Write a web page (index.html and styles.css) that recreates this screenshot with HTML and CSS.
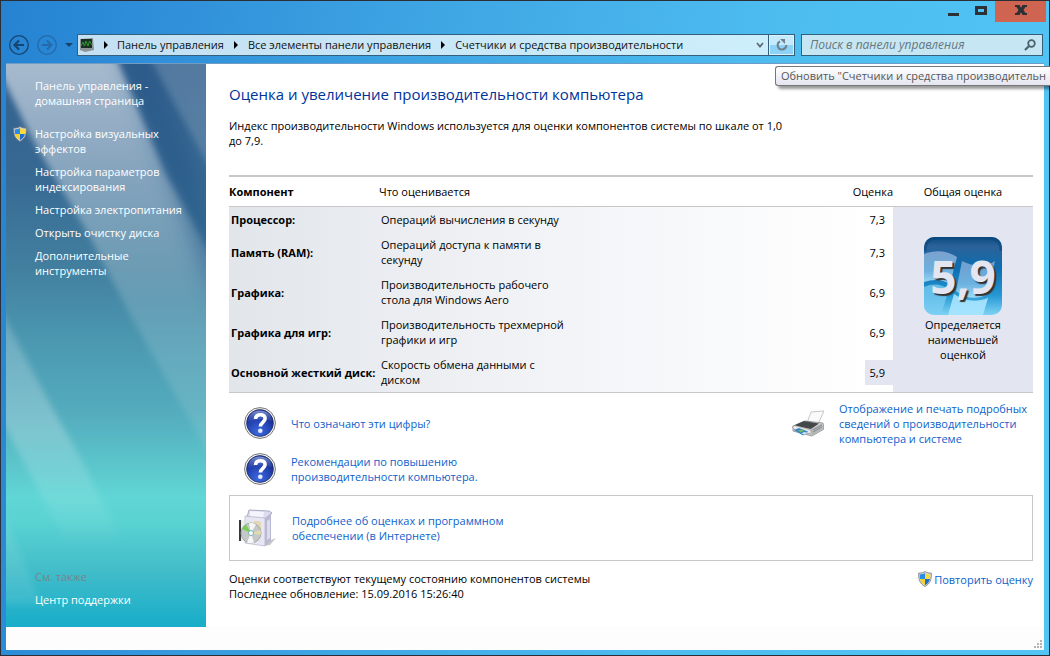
FILE: index.html
```html
<!DOCTYPE html>
<html lang="ru">
<head>
  <meta charset="UTF-8">
  <meta name="viewport" content="width=device-width, initial-scale=1.0">
  <title>Счетчики и средства производительности</title>
  <link rel="stylesheet" href="styles.css">
</head>
<body>
  <!-- shared icons -->
  <svg class="defs" width="0" height="0" aria-hidden="true">
    <defs>
      <radialGradient id="ballFill" cx="0.45" cy="0.85" r="0.8">
        <stop offset="0" stop-color="#3c6ae0"/>
        <stop offset="0.55" stop-color="#2545b4"/>
        <stop offset="1" stop-color="#101f78"/>
      </radialGradient>
      <linearGradient id="ballShine" x1="0" y1="0" x2="0" y2="1">
        <stop offset="0" stop-color="#a9bdf0" stop-opacity="0.75"/>
        <stop offset="1" stop-color="#4a6cd0" stop-opacity="0.2"/>
      </linearGradient>
      <clipPath id="shieldClip">
        <path d="M7 2C8.400 3 10.200 3.400 12.200 3.400 12.400 8 11.400 11.800 7 14.200 2.600 11.800 1.600 8 1.800 3.400 3.800 3.400 5.600 3 7 2z"/>
      </clipPath>
    </defs>
    <symbol id="shield" viewBox="0 0 14 16">
      <path d="M7 .5C8.500 1.600 10.700 2.100 13.300 2.100 13.700 8.500 12 12.900 7 15.500 2 12.900.3 8.500.7 2.100 3.300 2.100 5.500 1.600 7 .5z" fill="#d3d6da" stroke="#77777a" stroke-width="0.8"/>
      <g clip-path="url(#shieldClip)">
        <rect x="0" y="0" width="7" height="8" fill="#2a8ae8"/>
        <rect x="7" y="0" width="7" height="8" fill="#fbdc3c"/>
        <rect x="0" y="8" width="7" height="8" fill="#f8d02c"/>
        <rect x="7" y="8" width="7" height="8" fill="#1b6ed0"/>
      </g>
    </symbol>
    <symbol id="help" viewBox="0 0 32 32">
      <circle cx="16" cy="16" r="15.400" fill="#f4f4f4" stroke="#777" stroke-width="1"/>
      <circle cx="16" cy="16" r="13.400" fill="url(#ballFill)" stroke="#26346f" stroke-width="0.8"/>
      <path d="M4 15C4 7 10 3.500 16 3.500S28 7 28 14c-8-2-16-2-24 1z" fill="url(#ballShine)"/>
      <path d="M11.500 12c.2-3 2.200-4.300 4.900-4.300 2.800 0 4.700 1.500 4.700 3.900 0 3.600-4.700 3.800-4.700 7.800" fill="none" stroke="#fff" stroke-width="3.600"/>
      <circle cx="16.300" cy="23.700" r="2.300" fill="#e6eafb"/>
    </symbol>
  </svg>

  <div class="window">
    <header class="titlebar">
      <div class="caption">
        <button class="caption-button" aria-label="Свернуть">
          <svg width="12" height="12" viewBox="0 0 12 12"><path d="M1 9h11v3H1z" fill="#2d3136"/></svg>
        </button>
        <button class="caption-button" aria-label="Развернуть">
          <svg width="12" height="12" viewBox="0 0 12 12"><path d="M1.500 3.500h9v6h-9z" fill="none" stroke="#2d3136" stroke-width="3"/></svg>
        </button>
        <button class="caption-button close" aria-label="Закрыть">
          <svg width="12" height="10" viewBox="0 0 12 10"><path d="M0 0h4.500L6 2.700 7.500 0H12v2H10.500L8.500 5l2 3H12v2H7.500L6 7.300 4.500 10H0V8h1.500l2-3-2-3H0z" fill="#2d3136"/></svg>
        </button>
      </div>
      <nav class="navbar">
        <button class="round-button" aria-label="Назад">
          <svg width="20" height="20" viewBox="0 0 20 20" fill="none" stroke="#174571"><circle cx="10" cy="10" r="9.300" stroke-width="1.300"/><path d="M15 10H6M10 5.500L5.500 10l4.500 4.500" stroke-width="2.200"/></svg>
        </button>
        <button class="round-button" aria-label="Вперед">
          <svg width="20" height="20" viewBox="0 0 20 20" fill="none" stroke="#2469a9"><circle cx="10" cy="10" r="9.300" stroke-width="1.300"/><path d="M5 10h9M10 5.500l4.500 4.500-4.500 4.500" stroke-width="1.800"/></svg>
        </button>
        <button class="history-button" aria-label="Последние страницы">
          <svg width="8" height="4" viewBox="0 0 8 4"><path d="M0 0h8L4 4z" fill="#174571"/></svg>
        </button>
        <div class="address">
          <svg class="address-icon" width="14" height="14" viewBox="0 0 14 14">
            <path d="M0 1l13-1 1 12-9 2-5-2z" fill="#8c9495"/>
            <path d="M1 1h11v9H1z" fill="#173021"/>
            <path d="M1 8l2-4 1.500 4L6 3l2 5 1.500-5L12 7" fill="none" stroke="#2f9a35" stroke-width="1"/>
          </svg>
          <svg class="crumb-arrow" width="4" height="8" viewBox="0 0 4 8"><path d="M0 0l4 4-4 4z"/></svg>
          <a href="#">Панель управления</a>
          <svg class="crumb-arrow" width="4" height="8" viewBox="0 0 4 8"><path d="M0 0l4 4-4 4z"/></svg>
          <a href="#">Все элементы панели управления</a>
          <svg class="crumb-arrow" width="4" height="8" viewBox="0 0 4 8"><path d="M0 0l4 4-4 4z"/></svg>
          <a href="#">Счетчики и средства производительности</a>
          <button class="address-drop" aria-label="Предыдущие расположения">
            <svg width="8" height="6" viewBox="0 0 8 6"><path d="M1 1l3 3.500L7 1" fill="none" stroke="#5d6d76" stroke-width="1.800"/></svg>
          </button>
          <button class="refresh" aria-label="Обновить">
            <svg width="12" height="12" viewBox="0 0 12 12"><path d="M4 2.400A4.300 4.300 0 1 0 10.300 6" fill="none" stroke="#71818c" stroke-width="2"/><path d="M4 0h5v5z" fill="#71818c"/></svg>
          </button>
        </div>
        <div class="search">
          <input type="text" placeholder="Поиск в панели управления" aria-label="Поиск в панели управления">
          <svg width="12" height="12" viewBox="0 0 12 12" fill="none" stroke="#4c626d"><circle cx="7.500" cy="4.500" r="3.300" stroke-width="1.800"/><path d="M5 7L1 11" stroke-width="2.200"/></svg>
        </div>
      </nav>
      <div class="tooltip">Обновить "Счетчики и средства производительн</div>
    </header>

    <div class="client">
      <aside class="sidebar">
        <svg class="aurora" viewBox="0 0 200 563" preserveAspectRatio="none" aria-hidden="true">
          <defs>
            <linearGradient id="beam" x1="0" y1="0" x2="0" y2="1">
              <stop offset="0" stop-color="#fff" stop-opacity="0.6"/>
              <stop offset="0.35" stop-color="#fff" stop-opacity="0.36"/>
              <stop offset="0.6" stop-color="#fff" stop-opacity="0.16"/>
              <stop offset="1" stop-color="#fff" stop-opacity="0.08"/>
            </linearGradient>
            <linearGradient id="lowBeam" x1="0" y1="0" x2="0" y2="1">
              <stop offset="0" stop-color="#fff" stop-opacity="0.18"/>
              <stop offset="0.5" stop-color="#fff" stop-opacity="0.24"/>
              <stop offset="0.85" stop-color="#fff" stop-opacity="0.08"/>
              <stop offset="1" stop-color="#fff" stop-opacity="0"/>
            </linearGradient>
            <filter id="soft" x="-20%" y="-20%" width="140%" height="140%"><feGaussianBlur stdDeviation="3"/></filter>
            <filter id="softer" x="-50%" y="-20%" width="200%" height="140%"><feGaussianBlur stdDeviation="10"/></filter>
          </defs>
          <path d="M-20-20L27 76 84 173 127 256 161 316 215 410V210L160 110 105-20z" fill="url(#beam)" filter="url(#soft)"/>
          <path d="M110-20h22L215 170v80L165 120z" fill="#245384" opacity="0.5" filter="url(#softer)"/>
          <path d="M142-10h70V120z" fill="#fff" opacity="0.16" filter="url(#soft)"/>
          <path d="M-10 236L31 316 77 399 115 475 64 483 34 429-10 346z" fill="url(#lowBeam)" filter="url(#soft)"/>
          <path d="M-10 430l45 110h-45z" fill="#fff" opacity="0.08" filter="url(#soft)"/>
        </svg>
        <a class="home" href="#">Панель управления -<br>домашняя страница</a>
        <ul>
          <li><svg class="side-shield" width="14" height="16"><use href="#shield"/></svg><a href="#">Настройка визуальных<br>эффектов</a></li>
          <li><a href="#">Настройка параметров<br>индексирования</a></li>
          <li><a href="#">Настройка электропитания</a></li>
          <li><a href="#">Открыть очистку диска</a></li>
          <li><a href="#">Дополнительные<br>инструменты</a></li>
        </ul>
        <div class="see-also">
          <span>См. также</span>
          <a href="#">Центр поддержки</a>
        </div>
      </aside>

      <main class="main">
        <h1>Оценка и увеличение производительности компьютера</h1>
        <p class="intro">Индекс производительности Windows используется для оценки компонентов системы по шкале от 1,0<br>до 7,9.</p>

        <table class="scores">
          <thead>
            <tr>
              <th class="component" scope="col">Компонент</th>
              <th scope="col">Что оценивается</th>
              <th class="score" scope="col">Оценка</th>
              <th class="total" scope="col">Общая оценка</th>
            </tr>
          </thead>
          <tbody>
            <tr>
              <th scope="row">Процессор:</th>
              <td>Операций вычисления в секунду</td>
              <td class="score">7,3</td>
              <td class="total" rowspan="5">
                <div class="badge">
                  <svg width="78" height="78" viewBox="0 0 78 78" aria-hidden="true">
                    <defs>
                      <linearGradient id="badgeFill" x1="0" y1="0" x2="0" y2="1">
                        <stop offset="0" stop-color="#0b4a80"/>
                        <stop offset="0.12" stop-color="#2c6299"/>
                        <stop offset="0.4" stop-color="#0d6db0"/>
                        <stop offset="0.75" stop-color="#2798d4"/>
                        <stop offset="1" stop-color="#7fd3f5"/>
                      </linearGradient>
                      <linearGradient id="flagFill" x1="0" y1="0" x2="0" y2="1">
                        <stop offset="0" stop-color="#8aacd6"/>
                        <stop offset="0.6" stop-color="#7fbce6"/>
                        <stop offset="1" stop-color="#b9ebff"/>
                      </linearGradient>
                      <clipPath id="badgeClip"><rect width="78" height="78" rx="10"/></clipPath>
                    </defs>
                    <g clip-path="url(#badgeClip)">
                      <rect width="78" height="78" fill="url(#badgeFill)"/>
                      <path d="M0 17c12-5 24-3 33 3l-7 27C18 42 9 42 0 45z" fill="url(#flagFill)" opacity="0.85"/>
                      <path d="M38 24c12 6 24 6 33 0l-7 33c-11 6-22 5-32-3z" fill="url(#flagFill)" opacity="0.8"/>
                      <path d="M0 50c9-4 17-3 25 2l-8 26H0z" fill="#7ccdf3" opacity="0.75"/>
                      <path d="M30 57c10 7 22 9 34 4l-5 17H24z" fill="#a9e6ff" opacity="0.9"/>
                      <path d="M1 14C1 5 6 1 14 1h50c8 0 13 4 13 13" fill="none" stroke="#06477c" stroke-width="3" opacity="0.6"/>
                    </g>
                  </svg>
                  <span class="badge-value">5,9</span>
                </div>
                Определяется<br>наименьшей<br>оценкой
              </td>
            </tr>
            <tr>
              <th scope="row">Память (RAM):</th>
              <td>Операций доступа к памяти в<br>секунду</td>
              <td class="score">7,3</td>
            </tr>
            <tr>
              <th scope="row">Графика:</th>
              <td>Производительность рабочего<br>стола для Windows Aero</td>
              <td class="score">6,9</td>
            </tr>
            <tr>
              <th scope="row">Графика для игр:</th>
              <td>Производительность трехмерной<br>графики и игр</td>
              <td class="score">6,9</td>
            </tr>
            <tr>
              <th scope="row">Основной жесткий диск:</th>
              <td>Скорость обмена данными с<br>диском</td>
              <td class="score"><span class="lowest">5,9</span></td>
            </tr>
          </tbody>
        </table>

        <div class="links">
          <div class="help-links">
            <div class="link-row">
              <svg width="32" height="32"><use href="#help"/></svg>
              <a href="#">Что означают эти цифры?</a>
            </div>
            <div class="link-row">
              <svg width="32" height="32"><use href="#help"/></svg>
              <a href="#">Рекомендации по повышению<br>производительности компьютера.</a>
            </div>
          </div>
          <div class="link-row print-link">
            <svg width="32" height="28" viewBox="0 0 32 28">
              <path d="M15 13L19 2l13-1-6 13z" fill="#fafafa" stroke="#b9b9b9" stroke-width="0.800"/>
              <path d="M1 16l12-5 18 2 1 6-12 7-19-5z" fill="#d2d3d4" stroke="#88898b" stroke-width="0.800"/>
              <path d="M2 15.500L12 11l15 2.500L19 19z" fill="#45484b"/>
              <path d="M19 19l11-5.500 1 5-11 7z" fill="#b4b6b8"/>
              <path d="M21 20l9-5M21 22l9-5" stroke="#7d8083" stroke-width="0.800"/>
              <path d="M0 17l3-1.500 16 4.500v4L3 20z" fill="#e8e9ea" stroke="#888" stroke-width="0.600"/>
              <path d="M2 20l5-2 9 3.500-5 4z" fill="#3b87c6"/>
              <path d="M6 20.500l3-1 3 1-3 2z" fill="#79b957"/>
              <path d="M12 22l3 .5-2.500 2-3-.8z" fill="#cfe9fa"/>
            </svg>
            <a href="#">Отображение и печать подробных<br>сведений о производительности<br>компьютера и системе</a>
          </div>
        </div>

        <div class="more-box">
          <svg width="38" height="40" viewBox="0 0 38 40">
            <path d="M30 33l8-3-6 7-6 1z" fill="#c8c8c8"/>
            <path d="M9 9l2-7 20 1 3 2-5 6z" fill="#dcdcf0" stroke="#9a9abb" stroke-width="0.800"/>
            <path d="M12 3l14 1-1 6-13-1z" fill="#f4f4fc"/>
            <path d="M7 8l20 2v28L7 35z" fill="#e6e6f4" stroke="#a8a8bf" stroke-width="0.600"/>
            <path d="M27 10l6-5v28l-6 5z" fill="#b9b9d2"/>
            <path d="M29 13l3-2v19l-3 2z" fill="#dcdcec"/>
            <path d="M16 13l7 1v12l-7-3z" fill="#f0c479"/>
            <path d="M3 12l20 2v20L3 33z" fill="#dce5dd" opacity="0.600"/>
            <path d="M1 12h2v21H1z" fill="#36383a"/>
            <circle cx="13" cy="25" r="10" fill="#c4c8c8" stroke="#969b9b" stroke-width="0.800"/>
            <path d="M13 25L4 21a10 10 0 0 1 4-4.500z" fill="#79cc55"/>
            <path d="M13 25L11 15.300a10 10 0 0 1 7 1.300zM13 25l3 9.500a10 10 0 0 1-7 0z" fill="#f5f7f7"/>
            <path d="M13 25l9.500-3a10 10 0 0 1 0 5z" fill="#e4d9b1"/>
            <circle cx="13" cy="25" r="2.500" fill="#fff" stroke="#77b5b5" stroke-width="1"/>
          </svg>
          <a href="#">Подробнее об оценках и программном<br>обеспечении (в Интернете)</a>
        </div>

        <div class="summary">
          <p>Оценки соответствуют текущему состоянию компонентов системы<br>Последнее обновление: 15.09.2016 15:26:40</p>
          <a class="rerun" href="#"><svg width="14" height="16"><use href="#shield"/></svg>Повторить оценку</a>
        </div>
      </main>
    </div>

    <footer class="statusbar">
      <svg width="9" height="9" viewBox="0 0 9 9" fill="#b4b4b4"><path d="M6 0h2v2H6zM3 3h2v2H3zM6 3h2v2H6zM0 6h2v2H0zM3 6h2v2H3zM6 6h2v2H6z"/></svg>
    </footer>
  </div>
</body>
</html>
```

FILE: styles.css
```css
* {
  box-sizing: border-box;
}
body {
  margin: 0;
  font-family: "Open Sans", "Noto Sans", sans-serif;
  font-size: 11px;
  line-height: 15px;
  color: #000;
  overflow: hidden;
}
a {
  color: #0c62cb;
  text-decoration: none;
}
a:hover {
  text-decoration: underline;
}
button {
  display: flex;
  align-items: center;
  justify-content: center;
  padding: 0;
  border: none;
  background: none;
}
svg {
  display: block;
  flex: none;
}
p {
  margin: 0;
}
.defs {
  position: absolute;
}

/* window frame */
.window {
  display: flex;
  flex-direction: column;
  min-height: 100vh;
  padding: 0 5px 5px;
  border: 1px solid #2c2e36;
  background: linear-gradient(100deg, #2583d2 0%, #2f8fd9 14%, #3fa6e4 38%, #4dbdf0 68%, #52c5f5 100%);
}
.titlebar {
  position: relative;
  padding-bottom: 7px;
  border-bottom: 1px solid #6f9cc4;
}
.caption {
  display: flex;
  justify-content: flex-end;
  height: 21px;
  margin-right: -2px;
}
.caption-button {
  width: 28px;
  padding-bottom: 3px;
}
.caption-button.close {
  width: 51px;
  background: #cf6450;
}
.navbar {
  display: flex;
  align-items: center;
  height: 22px;
  margin: 12px 1px 0 3px;
}
.round-button {
  width: 20px;
  height: 20px;
  margin-right: 8px;
}
.history-button {
  width: 8px;
  height: 20px;
  margin-right: 4px;
}
.address {
  display: flex;
  flex: 1;
  align-items: center;
  height: 22px;
  border: 1px solid #35607d;
  background: linear-gradient(90deg, #c4e0f3, #cdeefb);
}
.address a {
  padding-bottom: 1px;
  color: #111;
  white-space: nowrap;
}
.address-icon {
  margin: 0 8px 0 2px;
}
.crumb-arrow {
  margin: 0 10px;
}
.address-icon + .crumb-arrow {
  margin: 0 9px 0 2px;
}
.address-drop {
  width: 18px;
  height: 20px;
  margin-left: auto;
}
.refresh {
  width: 25px;
  height: 20px;
  border: 1px solid #d9f2fe;
  outline: 1px solid #35607d;
  background: linear-gradient(#c5eafc 48%, #8dd2f7 52%);
}
.search {
  display: flex;
  align-items: center;
  width: 242px;
  height: 22px;
  margin-left: 6px;
  padding: 0 6px 0 8px;
  border: 1px solid #35607d;
  background: #c5e6f2;
}
.search input {
  flex: 1;
  min-width: 0;
  padding: 0;
  border: none;
  outline: none;
  background: none;
  font: italic 12px/18px "Open Sans", "Noto Sans", sans-serif;
}
.search input::placeholder {
  color: #65777f;
  opacity: 1;
}
.tooltip {
  position: absolute;
  top: 65px;
  right: -6px;
  left: 769px;
  z-index: 2;
  height: 20px;
  padding: 1px 0 2px 5px;
  border: 1px solid #767676;
  border-right: none;
  border-radius: 3px 0 0 3px;
  background: linear-gradient(#fff, #e4e5f0);
  box-shadow: 3px 3px 3px rgba(0, 0, 0, 0.4);
  color: #575757;
  white-space: nowrap;
}

/* sidebar */
.client {
  display: flex;
  flex: 1;
  background: #fff;
}
.sidebar {
  position: relative;
  display: flex;
  flex-direction: column;
  width: 200px;
  padding: 14px 0 20px 29px;
  background: linear-gradient(#33608e 0%, #376993 20%, #427f9f 36%, #4d9db4 52%, #54acbd 62%, #60d6d5 77%, #5bd3d3 81%, #42bdc9 90%, #17adc9 100%);
}
.aurora {
  position: absolute;
  inset: 0;
  width: 100%;
  height: 100%;
}
.sidebar a,
.see-also {
  position: relative;
  color: #fff;
}
.sidebar ul {
  display: flex;
  flex-direction: column;
  gap: 8px;
  margin: 18px 0 0;
  padding: 0;
  list-style: none;
}
.sidebar li {
  position: relative;
}
.side-shield {
  position: absolute;
  left: -22px;
  top: 0;
}
.see-also {
  display: flex;
  flex-direction: column;
  gap: 8px;
  margin-top: auto;
}
.see-also span {
  color: #75868a;
}

/* content */
.main {
  flex: 1;
  padding: 20px 11px 0 23px;
}
h1 {
  margin: 0;
  font-size: 15px;
  font-weight: normal;
  line-height: 20px;
  color: #003399;
}
.intro {
  margin-top: 14px;
}
.scores {
  width: 100%;
  margin: 27px 0 8px;
  border-collapse: separate;
  border-spacing: 0;
  border-top: 2px solid #c8c8c8;
  border-bottom: 1px solid #c8c8c8;
}
.scores th,
.scores td {
  padding: 5px 2px;
  text-align: left;
  white-space: nowrap;
}
.scores thead th {
  padding: 7px 0;
  border-bottom: 1px solid #c8c8c8;
  font-weight: normal;
}
.scores thead .component {
  width: 150px;
  font-weight: bold;
}
.scores tbody {
  background: linear-gradient(90deg, #e2e6eb 0%, #f4f5f8 45%, #fff 80%);
}
.scores .score {
  text-align: right;
}
.scores td.score {
  padding-right: 8px;
}
.lowest {
  display: inline-block;
  margin-right: -8px;
  padding: 5px 8px 5px 5px;
  background: #e3e6f1;
}
.scores .total {
  width: 140px;
  text-align: center;
}
.scores tbody .total {
  background: #e3e6f1;
}
.badge {
  position: relative;
  width: 78px;
  margin: 0 auto 2px;
}
.badge-value {
  position: absolute;
  inset: 0;
  font-size: 46px;
  font-weight: bold;
  line-height: 78px;
  color: #e3e6f1;
  text-shadow: 2px 2px 1px #333;
}
.links {
  display: flex;
  justify-content: space-between;
}
.help-links {
  display: flex;
  flex-direction: column;
  gap: 14px;
  padding: 6px 0 0 15px;
}
.link-row {
  display: flex;
  align-items: center;
  gap: 15px;
}
.print-link {
  align-self: flex-start;
}
.print-link a {
  width: 194px;
}
.more-box {
  display: flex;
  align-items: center;
  gap: 16px;
  height: 66px;
  margin-top: 10px;
  padding: 0 8px;
  border: 1px solid #c8c8c8;
}
.summary {
  display: flex;
  justify-content: space-between;
  align-items: flex-start;
  margin-top: 10px;
}
.rerun {
  display: flex;
  align-items: center;
  gap: 2px;
}
.statusbar {
  display: flex;
  justify-content: flex-end;
  align-items: flex-end;
  height: 23px;
  padding: 1px;
  background: #fdfdfd;
}
```
